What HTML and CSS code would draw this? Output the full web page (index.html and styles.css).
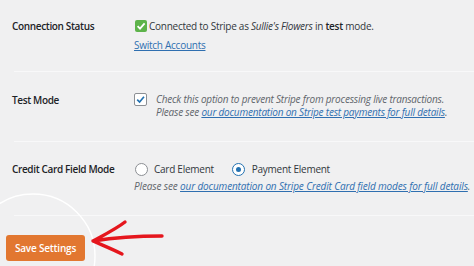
FILE: index.html
```html
<!DOCTYPE html>
<html>
<head>
<meta charset="utf-8">
<link rel="stylesheet" href="styles.css">
</head>
<body>
<div class="page">
  <div class="row row-conn">
    <div class="label">Connection Status</div>
    <div class="field">
      <div class="line">
        <span class="okbox"><svg viewBox="0 0 12 12" width="12" height="12"><path d="M2.6 6.2 L5 8.6 L9.6 3.4" fill="none" stroke="#fff" stroke-width="1.8"/></svg></span>
        <span class="status">Connected to Stripe as <em>Sullie's Flowers</em> in <b>test</b> mode.</span>
      </div>
      <div class="line"><a class="link" href="#">Switch Accounts</a></div>
    </div>
  </div>
  <div class="row row-test">
    <div class="label">Test Mode</div>
    <div class="field flex">
      <span class="cbox"><svg viewBox="0 0 12 12" width="11" height="11"><path d="M2.4 6.2 L5 8.8 L9.8 3" fill="none" stroke="#2271b1" stroke-width="1.8"/></svg></span>
      <div class="desc">Check this option to prevent Stripe from processing live transactions.<br>Please see <a class="link" href="#">our documentation on Stripe test payments for full details</a>.</div>
    </div>
  </div>
  <div class="row row-card">
    <div class="label">Credit Card Field Mode</div>
    <div class="field">
      <div class="line radios">
        <label class="radio"><span class="rdot"></span>Card Element</label>
        <label class="radio on"><span class="rdot"></span>Payment Element</label>
      </div>
      <div class="desc wide">Please see <a class="link" href="#">our documentation on Stripe Credit Card field modes for full details</a>.</div>
    </div>
  </div>
  <div class="actions">
    <button class="save">Save Settings</button>
  </div>
  <svg class="ring" width="140" height="140" viewBox="0 0 140 140"><circle cx="70" cy="70" r="62" fill="none" stroke="#ffffff" stroke-width="1.4"/></svg>
  <svg class="arrow" width="90" height="50" viewBox="0 0 90 50"><path d="M74 20 C56 20 30 21 5 25 M37 6 C28 13 14 20 5 25 C14 29 24 33 34 38" fill="none" stroke="#e5161d" stroke-width="3.4" stroke-linecap="round" stroke-linejoin="round"/></svg>
</div>
</body>
</html>
```
FILE: styles.css
```css
html, body { margin: 0; padding: 0; }
body {
  background: #f0f0f1;
  font-family: "Open Sans", "Noto Sans", sans-serif;
  color: #3c434a;
  width: 474px;
  height: 266px;
  overflow: hidden;
}
.page { position: relative; width: 474px; height: 266px; overflow: hidden; }
.row {
  display: grid;
  grid-template-columns: 120px 1fr;
  margin-left: 14px;
  border-bottom: 1px solid #f8f8f9;
  box-sizing: border-box;
}
.label {
  margin-left: -2px;
  font-size: 10px;
  font-weight: 600;
  letter-spacing: -0.35px;
  color: #1d2327;
  line-height: 18px;
  white-space: nowrap;
}
.row-conn { height: 72px; padding-top: 17px; }
.row-test { height: 70px; padding-top: 19px; }
.row-card { height: 74px; padding-top: 18px; }
.field { font-size: 10px; letter-spacing: -0.26px; color: #32373c; }
.flex { display: flex; align-items: flex-start; }
.line { line-height: 18px; display: flex; align-items: center; white-space: nowrap; }
.line + .line { margin-top: 1px; }
.okbox {
  width: 12px; height: 12px; border-radius: 2px; background: #5db34a;
  display: inline-flex; margin-left: 1px; margin-right: 2px;
}
.status b { font-weight: 600; color: #1d2327; }
.link { color: #2f6fb0; text-decoration: underline; }
.cbox {
  width: 11px; height: 11px; border: 1px solid #8c8f94; border-radius: 2px;
  background: #fff; display: inline-flex; align-items: center; justify-content: center;
  margin-top: 2px; margin-right: 9px; flex: none;
}
.desc {
  font-style: italic; color: #5f656b; font-size: 10px; line-height: 13px; white-space: nowrap;
  letter-spacing: -0.2px;
}
.desc.wide { letter-spacing: -0.14px; }
.row-test .desc { margin-top: 2px; }
.radios { margin-left: 1px; }
.radio { display: inline-flex; align-items: center; margin-right: 18px; color: #32373c; }
.rdot {
  width: 11px; height: 11px; border: 1px solid #8c8f94; border-radius: 50%;
  background: #fff; margin-right: 6px; display: inline-flex; align-items: center; justify-content: center;
}
.radio.on .rdot { border-color: #2271b1; margin-right: 7px; }
.radio.on .rdot::after { content: ""; width: 5px; height: 5px; border-radius: 50%; background: #2271b1; }
.row-card .desc { margin-top: 2px; }
.actions { padding: 19px 0 0 6px; }
.save {
  font-family: "Open Sans", "Noto Sans", sans-serif;
  font-size: 10px; font-weight: 600; color: #fff; letter-spacing: -0.2px;
  background: #e27730; border: none; border-radius: 3px;
  width: 79px; height: 26px; padding: 0; cursor: pointer;
}
.ring { position: absolute; left: -37px; top: 186px; }
.arrow { position: absolute; left: 88px; top: 216px; }
```
